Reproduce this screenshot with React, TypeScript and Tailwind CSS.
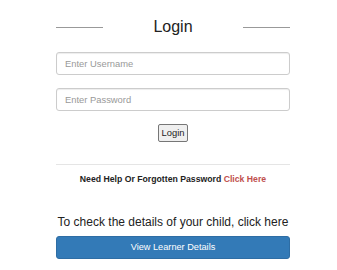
import * as React from 'react';

const App: React.FC = () => {
  return (
    <div className="w-[337px] h-[270px] bg-white font-['Liberation_Sans',Arial,sans-serif] text-[#333]">
      <div className="ml-[56px] w-[234px] pt-[16px]">
        <div className="flex items-center justify-between h-[22px]">
          <span className="block w-[47px] h-px bg-[#999]" />
          <h1 className="text-[16px] leading-[22px] text-[#222]">Login</h1>
          <span className="block w-[47px] h-px bg-[#999]" />
        </div>

        <div className="mt-[14px] flex flex-col gap-[13px]">
          <input
            type="text"
            placeholder="Enter Username"
            className="h-[23px] w-full rounded-[3px] border border-[#ccc] px-[8px] text-[9.4px] text-[#555] placeholder:text-[#999] shadow-[inset_0_1px_1px_rgba(0,0,0,0.075)] outline-none"
          />
          <input
            type="password"
            placeholder="Enter Password"
            className="h-[23px] w-full rounded-[3px] border border-[#ccc] px-[8px] text-[9.4px] text-[#555] placeholder:text-[#999] shadow-[inset_0_1px_1px_rgba(0,0,0,0.075)] outline-none"
          />
        </div>

        <div className="mt-[13px] flex justify-center">
          <button className="h-[18px] px-[3px] border border-[#767676] rounded-[2px] bg-[#efefef] text-[9.4px] leading-[16px] text-[#222]">
            Login
          </button>
        </div>

        <div className="mt-[22px] border-t border-[#e5e5e5]" />

        <p className="mt-[8px] text-center text-[8.7px] font-bold text-[#222]">
          Need Help Or Forgotten Password <a href="#" className="text-[#c0504d]">Click Here</a>
        </p>

        <p className="mt-[28px] text-center text-[12px] leading-[16px] text-[#222]">
          To check the details of your child, click here
        </p>

        <button className="mt-[6px] h-[23px] w-full rounded-[3px] bg-[#337ab7] border border-[#2e6da4] text-[9.2px] text-white">
          View Learner Details
        </button>
      </div>
    </div>
  );
};

export default App;
